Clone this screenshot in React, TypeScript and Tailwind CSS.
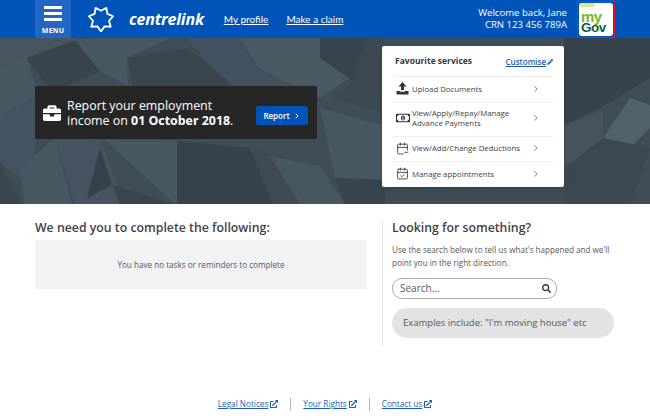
import { ChevronRight, CalendarMinus, CalendarCheck } from 'lucide-react';
import { FaBriefcase, FaPencilAlt, FaSearch, FaExternalLinkAlt, FaRegMoneyBillAlt } from 'react-icons/fa';

const shards: { points: string; fill: string }[] = [
  { points: '0,0 75,0 100,10 60,22 27,20 0,30', fill: '#465560' },
  { points: '27,20 75,2 100,33 67,48 47,48', fill: '#38454f' },
  { points: '0,30 27,20 35,48 35,60 0,77', fill: '#485862' },
  { points: '95,0 170,0 127,20 128,48 100,33 75,2', fill: '#485862' },
  { points: '127,20 187,10 213,30 233,48 133,48', fill: '#39464f' },
  { points: '187,0 240,0 255,30 300,48 233,48 213,30', fill: '#435260' },
  { points: '240,0 320,0 345,18 350,40 320,60 258,30', fill: '#4a5a64' },
  { points: '320,0 367,0 353,43 320,20', fill: '#37434d' },
  { points: '353,43 367,0 385,0 385,75 332,60', fill: '#3c4953' },
  { points: '0,77 35,60 35,150 0,125', fill: '#445360' },
  { points: '0,125 22,166 0,166', fill: '#39464f' },
  { points: '20,130 55,100 72,166 25,166', fill: '#485862' },
  { points: '55,100 100,102 115,140 122,166 75,166', fill: '#455460' },
  { points: '100,110 112,147 87,160', fill: '#35414b' },
  { points: '112,147 175,166 120,166', fill: '#39464f' },
  { points: '105,102 177,103 215,166 175,166', fill: '#485862' },
  { points: '177,103 250,110 273,166 177,166', fill: '#36424c' },
  { points: '250,110 290,120 312,166 273,166', fill: '#3e4b55' },
  { points: '270,118 320,128 345,166 300,166', fill: '#475760' },
  { points: '320,70 385,88 385,142 335,140', fill: '#485862' },
  { points: '335,140 385,142 385,166 345,166', fill: '#38454f' },
  { points: '564,0 650,0 650,40 600,70 564,87', fill: '#36424c' },
  { points: '603,100 630,60 650,67 650,90 630,110', fill: '#51626d' },
  { points: '565,87 603,73 603,100 575,125 565,125', fill: '#45545e' },
  { points: '565,130 603,100 650,110 630,166 565,166', fill: '#3b4852' },
];

const services = [
  { icon: 'upload', label: 'Upload Documents', h: 'h-[26px]', pb: 'pb-[2px]' },
  { icon: 'money', label: 'View/Apply/Repay/Manage\nAdvance Payments', h: 'h-[34px]', pb: 'pb-[4px]' },
  { icon: 'minus', label: 'View/Add/Change Deductions', h: 'h-[25px]', pb: 'pb-[2px]' },
  { icon: 'check', label: 'Manage appointments', h: 'h-[26px]', pb: 'pb-[2px]' },
];

// seven pointed star, one point straight down
function starPath() {
  const pts: string[] = [];
  for (let i = 0; i < 14; i++) {
    const r = i % 2 === 0 ? 12.4 : 8.2;
    const a = ((90 + (i * 360) / 14) * Math.PI) / 180;
    pts.push(`${(13 + r * Math.cos(a)).toFixed(2)},${(13 + r * Math.sin(a)).toFixed(2)}`);
  }
  return pts.join(' ');
}

function ServiceIcon({ name }: { name: string }) {
  if (name === 'upload') {
    return (
      <svg width="13" height="13" viewBox="0 0 13 13" fill="#33363a">
        <path d="M6.5 0 L10.5 4.5 H8 V8 H5 V4.5 H2.5 Z" />
        <path d="M0.5 9 H4 V9.8 H9 V9 H12.5 V12.5 H0.5 Z" />
      </svg>
    );
  }
  if (name === 'money') return <FaRegMoneyBillAlt className="text-[14px] text-[#33363a]" />;
  if (name === 'minus') return <CalendarMinus size={13} strokeWidth={1.6} className="text-[#33363a]" />;
  return <CalendarCheck size={13} strokeWidth={1.6} className="text-[#33363a]" />;
}

function FooterLink({ label }: { label: string }) {
  return (
    <a className="flex items-center gap-[2px] text-[8.2px] text-[#1a5fb4] underline">
      {label}
      <FaExternalLinkAlt className="text-[8px]" />
    </a>
  );
}

export default function App() {
  return (
    <div className="w-[650px] h-[420px] overflow-hidden bg-white font-['Open_Sans',sans-serif] text-[#3a3d40]">
      {/* header */}
      <header className="flex h-[38px] items-center bg-[#0053b8] pl-[35px] pr-[35px] text-white">
        <button className="flex h-[38px] w-[36px] flex-col items-center bg-[#2167c2] pt-[6px]">
          <span className="h-[3px] w-[18px] bg-white" />
          <span className="mt-[3px] h-[3px] w-[18px] bg-white" />
          <span className="mt-[3px] h-[3px] w-[18px] bg-white" />
          <span className="mt-[5px] text-[7px] font-bold leading-[9px] tracking-[0.2px]">MENU</span>
        </button>
        <svg className="ml-[17px]" width="26" height="26" viewBox="0 0 26 26" fill="none" stroke="white" strokeWidth="1.8" strokeLinejoin="round">
          <polygon points={starPath()} />
        </svg>
        <span className="ml-[15px] text-[16px] font-bold italic tracking-[-0.2px]">centrelink</span>
        <a className="ml-[20px] font-['Lato',sans-serif] text-[10px] underline">My profile</a>
        <a className="ml-[18px] font-['Lato',sans-serif] text-[10px] underline">Make a claim</a>
        <div className="ml-auto mr-[10px] text-right text-[9.6px] leading-[12px]">
          <div>Welcome back, Jane</div>
          <div>CRN 123 456 789A</div>
        </div>
        <div className="h-[37px] w-[38px] border-[1.5px] border-[#e0142a] bg-[#0053b8] p-[1px]">
          <div className="relative flex h-full flex-col items-start justify-end rounded-[3px] bg-white pb-[2px] pl-[2px] font-['Liberation_Sans',sans-serif] font-bold">
            <span className="absolute left-[1px] top-0 h-[4px] w-[15px] rounded-r-[2px] bg-[#e6e48a]" />
            <span className="text-[15px] leading-[11px] tracking-[-0.5px] text-[#74b82a]">my</span>
            <span className="text-[13.5px] leading-[12px] tracking-[-0.5px] text-[#0d5c46]">Gov</span>
          </div>
        </div>
      </header>

      {/* hero */}
      <section className="relative flex h-[166px] items-start justify-between overflow-hidden bg-[#3f4d57] px-[35px] pr-[86px]">
        <svg className="absolute inset-0" width="650" height="166">
          {shards.map((s, i) => (
            <polygon key={i} points={s.points} fill={s.fill} />
          ))}
        </svg>

        <div className="relative mt-[48px] flex h-[53px] w-[282px] items-center rounded-[2px] bg-[#262626] pl-[8px] pr-[9px] text-white">
          <FaBriefcase className="text-[18px]" />
          <div className="ml-[6px] text-[12.4px] leading-[15px]">
            <div>Report your employment</div>
            <div>
              income on <b>01 October 2018</b>.
            </div>
          </div>
          <button className="ml-auto mt-[6px] flex h-[19px] w-[52px] items-center justify-center gap-[3px] rounded-[2px] bg-[#0053b8] text-[8px] font-semibold">
            Report <ChevronRight size={8} strokeWidth={3} />
          </button>
        </div>

        <div className="relative mt-[8px] h-[141px] w-[182px] rounded-[2px] bg-white px-[11px] shadow-md">
          <div className="flex h-[30px] items-center justify-between pt-[1px]">
            <span className="ml-[2px] text-[8.5px] font-bold text-[#35383b]">Favourite services</span>
            <a className="flex items-center gap-[1px] text-[8px] font-semibold text-[#1a5fb4] underline">
              Customise
              <FaPencilAlt className="text-[6px]" />
            </a>
          </div>
          {services.map((s) => (
            <div key={s.label} className={`flex ${s.h} ${s.pb} items-center border-t-[1.5px] border-[#eeeeee]`}>
              <span className="ml-[2px] flex w-[15px] justify-center">
                <ServiceIcon name={s.icon} />
              </span>
              <span className="ml-[2px] whitespace-pre-line text-[7.8px] leading-[10px] text-[#3e4144]">{s.label}</span>
              <ChevronRight size={10} strokeWidth={1.6} className="ml-auto mr-[12px] text-[#444]" />
            </div>
          ))}
        </div>
      </section>

      {/* main */}
      <main className="flex px-[35px] pt-[16px]">
        <div className="w-[332px]">
          <h2 className="text-[12.3px] font-semibold leading-[16px] text-[#3f4244]">We need you to complete the following:</h2>
          <div className="mt-[4px] flex h-[49px] items-center justify-center bg-[#f1f2f4] pt-[2px] text-[8.15px] text-[#55585b]">
            You have no tasks or reminders to complete
          </div>
        </div>
        <div className="ml-[15px] h-[126px] w-[232px] border-l border-[#e6e6e6] pl-[9px]">
          <h2 className="text-[12.3px] font-semibold leading-[16px] text-[#3f4244]">Looking for something?</h2>
          <p className="mt-[7px] text-[8.1px] leading-[13px] text-[#55585b]">
            Use the search below to tell us what's happened and we'll point you in the right direction.
          </p>
          <div className="mt-[9px] flex h-[21px] w-[165px] items-center justify-between rounded-[10px] border border-[#a9acaf] pl-[7px] pr-[5px]">
            <span className="text-[10px] text-[#55585b]">Search...</span>
            <FaSearch className="text-[9px] text-[#33363a]" />
          </div>
          <div className="mt-[9px] flex h-[30px] items-center rounded-[15px] bg-[#e3e3e3] pl-[11px] text-[9.5px] text-[#55585b]">
            Examples include: "I'm moving house" etc
          </div>
        </div>
      </main>

      {/* footer */}
      <footer className="mt-[52px] flex items-center justify-center gap-[12px]">
        <FooterLink label="Legal Notices" />
        <span className="h-[13px] w-px bg-[#b5b5b5]" />
        <FooterLink label="Your Rights" />
        <span className="h-[13px] w-px bg-[#b5b5b5]" />
        <FooterLink label="Contact us" />
      </footer>
    </div>
  );
}
